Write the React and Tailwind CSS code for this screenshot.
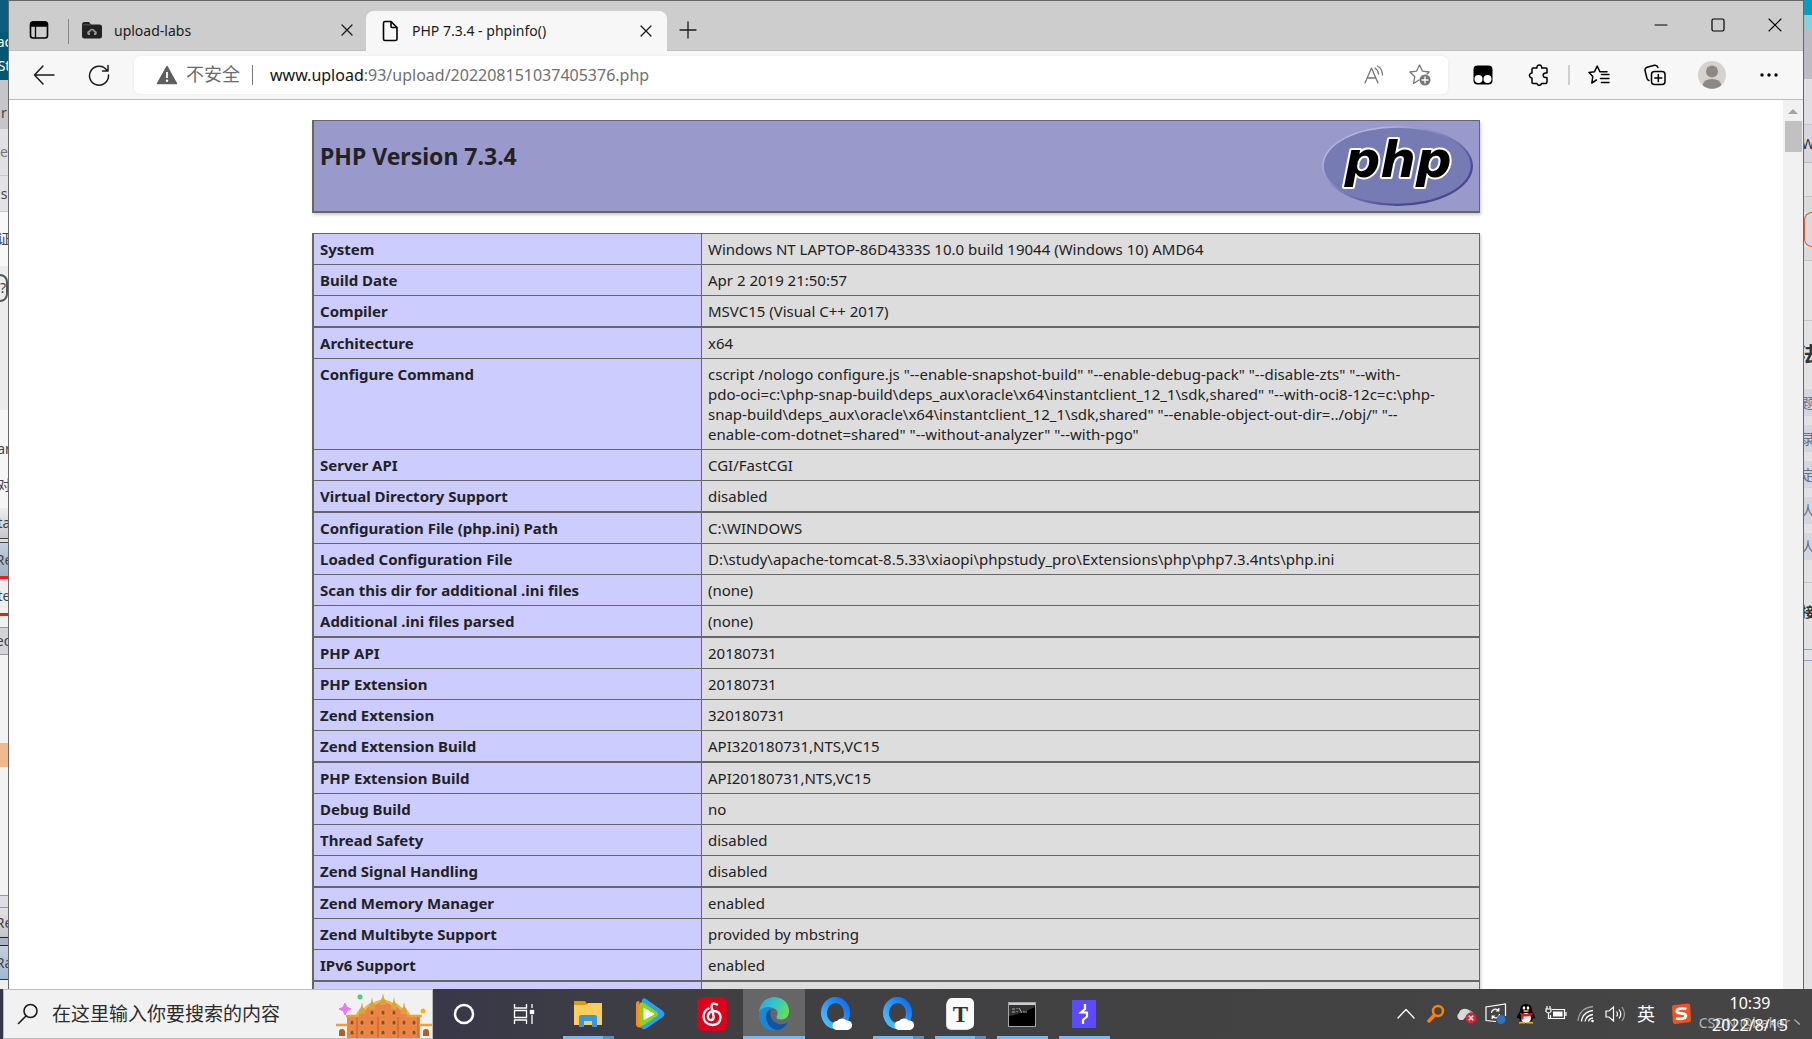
import clsx from 'clsx';

const CONFIGURE = [
  'cscript /nologo configure.js "--enable-snapshot-build" "--enable-debug-pack" "--disable-zts" "--with-',
  'pdo-oci=c:\\php-snap-build\\deps_aux\\oracle\\x64\\instantclient_12_1\\sdk,shared" "--with-oci8-12c=c:\\php-',
  'snap-build\\deps_aux\\oracle\\x64\\instantclient_12_1\\sdk,shared" "--enable-object-out-dir=../obj/" "--',
  'enable-com-dotnet=shared" "--without-analyzer" "--with-pgo"',
].join('\n');

const ROWS = [
  {name: 'System', value: 'Windows NT LAPTOP-86D4333S 10.0 build 19044 (Windows 10) AMD64'},
  {name: 'Build Date', value: 'Apr 2 2019 21:50:57'},
  {name: 'Compiler', value: 'MSVC15 (Visual C++ 2017)'},
  {name: 'Architecture', value: 'x64', thick: true},
  {name: 'Configure Command', value: CONFIGURE},
  {name: 'Server API', value: 'CGI/FastCGI'},
  {name: 'Virtual Directory Support', value: 'disabled'},
  {name: 'Configuration File (php.ini) Path', value: 'C:\\WINDOWS', thick: true},
  {
    name: 'Loaded Configuration File',
    value: 'D:\\study\\apache-tomcat-8.5.33\\xiaopi\\phpstudy_pro\\Extensions\\php\\php7.3.4nts\\php.ini',
  },
  {name: 'Scan this dir for additional .ini files', value: '(none)'},
  {name: 'Additional .ini files parsed', value: '(none)'},
  {name: 'PHP API', value: '20180731', thick: true},
  {name: 'PHP Extension', value: '20180731'},
  {name: 'Zend Extension', value: '320180731'},
  {name: 'Zend Extension Build', value: 'API320180731,NTS,VC15'},
  {name: 'PHP Extension Build', value: 'API20180731,NTS,VC15', thick: true},
  {name: 'Debug Build', value: 'no'},
  {name: 'Thread Safety', value: 'disabled'},
  {name: 'Zend Signal Handling', value: 'disabled'},
  {name: 'Zend Memory Manager', value: 'enabled', thick: true},
  {name: 'Zend Multibyte Support', value: 'provided by mbstring'},
  {name: 'IPv6 Support', value: 'enabled'},
  {name: '', value: '', thick: true},
];

// slices of the windows that lie behind the browser
const LEFT_EDGE = [
  {cls: 'h-[32px] bg-[#0b5f7c]'},
  {cls: 'h-[20px] bg-[#005874] text-white', text: 'ac'},
  {cls: 'h-[28px] bg-[#005874] text-white', text: 'St'},
  {cls: 'h-[49px] bg-[#c6c5c9] pt-4', text: 'r'},
  {cls: 'h-[47px] border-b border-[#c8c8ce] bg-[#e1e0e5] text-[#777] text-lg', text: 'e'},
  {cls: 'h-[36px] border-b border-[#c8c8ce] bg-[#e3e2e7]', text: 's'},
  {cls: 'h-[54px] bg-[#f8f8f8]', text: '证'},
  {cls: 'h-[8px] bg-[#ececec]'},
  {cls: 'h-[28px] rounded-r-full border-y-2 border-r-2 border-[#555] bg-[#ececec]', text: '?'},
  {cls: 'h-[108px] bg-[#ececec]'},
  {cls: 'h-[26px] bg-[#f6f6f6]'},
  {cls: 'h-[26px] bg-[#f6f6f6]', text: 'ar'},
  {cls: 'h-[46px] bg-[#f6f6f6]', text: '对'},
  {cls: 'h-[30px] bg-linear-to-b from-[#eee] to-[#c8c8cc]', text: 'ta'},
  {cls: 'h-[5px] border-y border-[#444] bg-[#ddd]'},
  {cls: 'h-[33px] bg-linear-to-b from-[#c3d0dd] to-[#9fb2c6]', text: 'Re'},
  {cls: 'h-[3px] bg-[#ee1c12]'},
  {cls: 'h-[34px] bg-[#efefef]', text: 'te'},
  {cls: 'h-[3px] bg-[#ee1c12]'},
  {cls: 'h-[11px] bg-[#f0f0f0]'},
  {cls: 'h-[28px] border-y border-[#999] bg-[#d3d4d8]', text: 'eq'},
  {cls: 'h-[88px] bg-[#f3f3f3]'},
  {cls: 'h-[24px] bg-[#f0b98e]'},
  {cls: 'h-[128px] bg-[#f3f3f3]'},
  {cls: 'h-[13px] border-y border-[#999] bg-[#dcdfe6]'},
  {cls: 'h-[29px] bg-linear-to-b from-[#e4e4e6] to-[#c4c4c8]', text: 'Re'},
  {cls: 'h-[9px] border-y border-[#223] bg-[#a9b4c4]'},
  {cls: 'h-[34px] border-b border-[#334] bg-linear-to-b from-[#c3d0dd] to-[#9fbad2]', text: 'Ra'},
  {cls: 'grow bg-[#eee]'},
];

const RIGHT_EDGE = [
  {cls: 'h-[15px] bg-[#0a9cbd]'},
  {cls: 'h-[14px] bg-[#86cfdb]'},
  {cls: 'h-[50px] bg-[#bcbbc2]'},
  {cls: 'h-[46px] border-b border-[#c5c4ca] bg-[#dfdee3]'},
  {cls: 'h-[38px] border-b border-[#bbb] bg-[#d7d6dc]', text: 'W'},
  {cls: 'h-[34px] border-b border-[#c5c5c5] bg-[#e2e2e2]'},
  {cls: 'h-[15px] bg-[#dadada]'},
  {cls: 'h-[35px] rounded-l-full border border-r-0 border-[#e05a40] bg-[#dadada]'},
  {cls: 'h-[14px] border-b border-[#c5c5c5] bg-[#dadada]'},
  {cls: 'h-[60px] border-b border-[#c5c5c5] bg-[#e4e4e4]'},
  {cls: 'h-[68px] text-xl font-bold', text: '法'},
  {cls: 'mb-[9px] h-[27px] bg-[#d3d6de] text-[#66708c]', text: '题'},
  {cls: 'mb-[9px] h-[27px] bg-[#d3d6de] text-[#66708c]', text: '录'},
  {cls: 'mb-[9px] h-[27px] bg-[#d3d6de] text-[#66708c]', text: '定'},
  {cls: 'mb-[9px] h-[27px] bg-[#d3d6de] text-[#66708c]', text: '人'},
  {cls: 'h-[27px] bg-[#d3d6de] text-[#66708c]', text: '人'},
  {cls: 'h-[23px] border-b border-[#c5c5c5]'},
  {cls: 'h-[58px] text-lg font-bold', text: '接'},
  {cls: 'h-[28px] text-[#4a76a8]', text: '□'},
  {cls: 'grow'},
];

const Edge = ({slices, base}) => (
  <div aria-hidden="true" className={clsx('flex w-2 shrink-0 flex-col overflow-hidden', base)}>
    {slices.map((s, i) => (
      <div
        key={i}
        className={clsx('flex shrink-0 items-center justify-center overflow-hidden text-sm whitespace-nowrap', s.cls)}
      >
        {s.text}
      </div>
    ))}
  </div>
);

const Svg = ({size = 20, box = 20, children, className}) => (
  <svg
    width={size}
    height={size}
    viewBox={`0 0 ${box} ${box}`}
    fill="none"
    stroke="currentColor"
    strokeWidth="1.3"
    strokeLinecap="round"
    strokeLinejoin="round"
    className={clsx('shrink-0', className)}
  >
    {children}
  </svg>
);

const CloseIcon = () => (
  <Svg size={12} box={12}>
    <path d="M1 1l10 10M11 1L1 11" />
  </Svg>
);

const TabBar = () => (
  <div className="flex h-[51px] items-end border-b border-[#bfbfbf] bg-[#cdcdcd] text-[14px] text-[#1b1b1b]">
    <button type="button" aria-label="Tab actions" className="flex h-[39px] w-[59px] items-center justify-center">
      <Svg size={20} className="text-black">
        <rect x="1.5" y="2" width="17" height="16" rx="2.5" strokeWidth="1.6" />
        <path d="M2 6V4.500A2.500 2.500 0 0 1 4.500 2h11A2.500 2.500 0 0 1 18 4.500V6z" fill="currentColor" />
        <path d="M6.500 6v12" />
      </Svg>
    </button>
    <span className="mb-[6px] h-[25px] w-px bg-[#888]" />
    <div className="flex h-[39px] w-[297px] items-center pl-[13px]">
      <svg width="20" height="18" viewBox="0 0 20 18" className="shrink-0">
        <path d="M0 3.500Q0 1 2.500 1H7l2 2.500h8.500Q20 3.500 20 6v9q0 2.500-2.500 2.500h-15Q0 17.500 0 15z" fill="#222" />
        <path d="M0 5Q0 3 2 3h6l1 1.500H0z" fill="#444" />
        <path d="M6.500 14a2.200 2.200 0 0 1 .5-4.200 3.200 3.200 0 0 1 6 0 2.200 2.200 0 0 1 .5 4.200H12V12h1l-3-3-3 3h1v2z" fill="#999" />
      </svg>
      <span className="ml-3 grow">upload-labs</span>
      <button type="button" aria-label="Close upload-labs" className="mr-[13px]">
        <CloseIcon />
      </button>
    </div>
    <div className="-mb-px flex h-[40px] w-[301px] items-center rounded-t-lg bg-[#f7f7f7] pr-[15px] pl-[13px]">
      <Svg size={22} box={22} className="text-black">
        <path d="M6 1.500h6L18 7.500V19q0 1.500-1.500 1.500H6Q4.500 20.500 4.500 19V3Q4.500 1.500 6 1.500z" strokeWidth="1.6" />
        <path d="M12 2v4.500q0 1 1 1h4.500" strokeWidth="1.6" />
      </Svg>
      <span className="ml-[11px] grow">PHP 7.3.4 - phpinfo()</span>
      <button type="button" aria-label="Close phpinfo">
        <CloseIcon />
      </button>
    </div>
    <button type="button" aria-label="New tab" className="flex h-[39px] w-[42px] items-center justify-center">
      <Svg size={18} box={18}>
        <path d="M9 1v16M1 9h16" />
      </Svg>
    </button>
    <div className="ml-auto flex h-full items-center text-black">
      <button type="button" aria-label="Minimize" className="flex h-full w-[57px] items-center justify-center">
        <Svg size={14} box={14}>
          <path d="M1 7h12" strokeWidth="1" />
        </Svg>
      </button>
      <button type="button" aria-label="Maximize" className="flex h-full w-[57px] items-center justify-center">
        <Svg size={14} box={14}>
          <rect x="1" y="1" width="12" height="12" rx="1.500" strokeWidth="1.200" />
        </Svg>
      </button>
      <button type="button" aria-label="Close window" className="flex h-full w-[57px] items-center justify-center">
        <Svg size={14} box={14}>
          <path d="M1 1l12 12M13 1L1 13" strokeWidth="1.100" />
        </Svg>
      </button>
    </div>
  </div>
);

const ToolButton = ({label, wide, children}) => (
  <button
    type="button"
    aria-label={label}
    className={clsx('flex h-full shrink-0 items-center justify-center', wide ? 'w-[58px]' : 'w-[56px]')}
  >
    {children}
  </button>
);

const Toolbar = () => (
  <div className="flex h-[50px] items-center border-b border-[#bdbdbd] bg-[#f7f7f7] pr-[6px] text-[#1b1b1b]">
    <button type="button" aria-label="Back" className="ml-[24px] shrink-0">
      <Svg size={22} box={22}>
        <path d="M21 11H1.500M10 2L1.500 11l8.500 9" strokeWidth="1.500" />
      </Svg>
    </button>
    <button type="button" aria-label="Refresh" className="mr-[24px] ml-[33px] shrink-0">
      <Svg size={22} box={22}>
        <path d="M19 6.500A9.500 9.500 0 1 0 20.500 11M20 1.500v5.500h-5.500" strokeWidth="1.500" />
      </Svg>
    </button>
    <div className="flex h-[38px] min-w-0 grow items-center rounded-md bg-white pl-[22px] shadow-[0_0_3px_#e8e8e8]">
      <svg width="22" height="20" viewBox="0 0 22 20" className="shrink-0">
        <path d="M11 1.500L20.500 18.500H1.500z" fill="#5f5f5f" stroke="#5f5f5f" strokeWidth="1.500" strokeLinejoin="round" />
        <path d="M11 7v6" stroke="#fff" strokeWidth="1.800" />
        <circle cx="11" cy="15.800" r="1.200" fill="#fff" />
      </svg>
      <span className="ml-[8px] shrink-0 text-[18px] text-[#6b6b6b]">不安全</span>
      <span className="mr-[17px] ml-[12px] h-5 w-px shrink-0 bg-[#777]" />
      <p className="min-w-0 grow truncate text-[16px] text-[#6f6f6f]">
        <span className="text-[#111]">www.upload</span>:93/upload/202208151037405376.php
      </p>
      <button type="button" aria-label="Read aloud" className="flex w-[46px] shrink-0 justify-center text-[#777]">
        <Svg size={20}>
          <path d="M1 18L7.500 3 14 18M3.200 13h8.600" />
          <path d="M11 3q3 2 3.500 6M13.500 1q5 3 5 9" />
        </Svg>
      </button>
      <button type="button" aria-label="Add to favorites" className="mr-[5px] flex w-[46px] shrink-0 justify-center text-[#777]">
        <Svg size={22} box={22}>
          <path d="M10 16l-5.500 3.500 1.300-6.800L.8 8l6.700-.8L10.500 1l3 6.200 6.700.8-2.200 2" />
          <circle cx="16" cy="16" r="5.500" fill="currentColor" stroke="none" />
          <path d="M16 13v6M13 16h6" stroke="#fff" />
        </Svg>
      </button>
    </div>
    <div className="ml-[7px] flex h-full items-center text-black">
      <ToolButton label="Tampermonkey">
        <svg width="20" height="20" viewBox="0 0 20 20">
          <rect x="0.500" y="0.500" width="19" height="19" rx="4" />
          <circle cx="5.500" cy="14" r="4" fill="#fff" />
          <circle cx="14.500" cy="14" r="4" fill="#fff" />
        </svg>
      </ToolButton>
      <ToolButton label="Extensions">
        <Svg size={22} box={22}>
          <path
            d="M5 4h4a2.400 2.400 0 1 1 4.600 0H18q1 0 1 1v4h-1.500a2.300 2.300 0 0 0 0 4.600H19V18q0 1.500-1.500 1.500h-4a2.300 2.300 0 0 1-4.500 0H5q-1 0-1-1v-4.500a2.500 2.500 0 1 1 0-5V5q0-1 1-1z"
            strokeWidth="1.500"
          />
        </Svg>
      </ToolButton>
      <span className="mx-px h-5 w-[2px] bg-[#cfcfcf]" />
      <ToolButton label="Favorites">
        <Svg size={22} box={22}>
          <path d="M8.500 16l-4.700 3 1-6.500L1 8.500l5.500-.8L9.200 2l2.700 5.700H19" strokeWidth="1.500" />
          <path d="M13.500 10.500H21M12.500 14.500H21M13.500 18.500H21" strokeWidth="1.500" />
        </Svg>
      </ToolButton>
      <ToolButton label="Collections">
        <Svg size={22} box={22}>
          <rect x="7.500" y="7.500" width="13.500" height="13" rx="3" strokeWidth="1.500" />
          <path d="M14.300 10.500v7M10.800 14h7M5 16.500q-1.500-.5-2-2L1 6.500Q.6 4 3 3.200L10.500 1.200Q13 .8 14 3.500" strokeWidth="1.500" />
        </Svg>
      </ToolButton>
      <ToolButton label="Profile" wide>
        <svg width="28" height="28" viewBox="0 0 28 28">
          <circle cx="14" cy="14" r="14" fill="#d6d3cf" />
          <circle cx="14" cy="10.500" r="6" fill="#8d8884" />
          <path d="M4.500 24Q6 18 14 18t9.500 6A14 14 0 0 1 4.500 24z" fill="#8d8884" />
        </svg>
      </ToolButton>
      <ToolButton label="Settings and more">
        <svg width="18" height="4" viewBox="0 0 18 4">
          <circle cx="2" cy="2" r="1.700" />
          <circle cx="9" cy="2" r="1.700" />
          <circle cx="16" cy="2" r="1.700" />
        </svg>
      </ToolButton>
    </div>
  </div>
);

const PhpLogo = () => (
  <svg width="151" height="80" viewBox="0 0 151 80" role="img" aria-label="PHP logo" className="shrink-0">
    <defs>
      <linearGradient id="rim" x1="0" y1="0" x2="1" y2="1">
        <stop offset="0.200" stopColor="#b4b5dc" />
        <stop offset="0.500" stopColor="#777bb3" />
        <stop offset="0.750" stopColor="#484893" />
      </linearGradient>
    </defs>
    <ellipse cx="75.500" cy="40" rx="75.500" ry="40" fill="url(#rim)" />
    <ellipse cx="75.300" cy="39.700" rx="73.500" ry="38" fill="#777bb3" />
    <text
      x="76"
      y="51"
      textAnchor="middle"
      fontFamily="DejaVu Sans, sans-serif"
      fontSize="50"
      fontWeight="700"
      fontStyle="italic"
      fill="#000"
      stroke="#fff"
      strokeWidth="4"
      strokeLinejoin="round"
      paintOrder="stroke"
    >
      php
    </text>
  </svg>
);

const PhpInfo = () => (
  <div className="min-w-0 grow overflow-hidden bg-white pt-5 text-[#222]">
    <header className="mx-auto flex w-full max-w-[1168px] justify-between border border-b-2 border-l-2 border-[#666] bg-[#9999cc] px-[6px] py-[5px] shadow-[1px_2px_3px_#ccc]">
      <h1 className="pt-[14px] text-[23px] leading-[32px] font-bold">PHP Version 7.3.4</h1>
      <PhpLogo />
    </header>
    <table className="mx-auto mt-5 w-full max-w-[1168px] table-fixed border-separate border-spacing-0 border-r border-l-2 border-[#666] text-[15px] leading-[20px] shadow-[1px_2px_3px_#ccc]">
      <colgroup>
        <col className="w-[387px]" />
        <col />
      </colgroup>
      <tbody>
        {ROWS.map((row, i) => (
          <tr key={i} className="align-top">
            <th
              scope="row"
              className={clsx('h-[31px] border-[#666] bg-[#ccccff] px-[6px] py-[5px] text-left font-bold', row.thick ? 'border-t-2' : 'border-t')}
            >
              {row.name}
            </th>
            <td
              className={clsx('border-l border-[#666] bg-[#dddddd] px-[6px] py-[5px] whitespace-pre-line', row.thick ? 'border-t-2' : 'border-t')}
            >
              {row.value}
            </td>
          </tr>
        ))}
      </tbody>
    </table>
  </div>
);

const Scrollbar = () => (
  <div className="flex w-5 shrink-0 flex-col items-center bg-[#f1f1f1] pt-[9px]">
    <svg width="10" height="5" viewBox="0 0 10 5">
      <path d="M5 0l5 5H0z" fill="#a3a3a3" />
    </svg>
    <span className="mt-[7px] h-[31px] w-[17px] bg-[#c1c1c1]" />
  </div>
);

const Temple = () => (
  <svg width="96" height="44" viewBox="0 0 96 44" className="shrink-0 self-end">
    <path d="M11 44V22h10q1-6 8-7 3-5 9-5 4-3 9-3t9 3q6 0 9 5 7 1 8 7h11v22z" fill="#ea8346" />
    <path d="M21 22q1-6 8-7 3-5 9-5 4-3 9-3t9 3q6 0 9 5 7 1 8 7" fill="none" stroke="#e8b84a" strokeWidth="2.500" />
    {[16, 37, 57, 77].map((x) => (
      <path key={x} d={`M${x + 5} 23v21`} stroke="#d96f33" strokeWidth="2" />
    ))}
    <path d="M10 22h13M71 22h15M0 31h12M83 31h13" stroke="#e0a82e" strokeWidth="2.500" />
    {[26, 36, 47, 58, 68].map((x, i) => {
      const top = [11, 6, 2, 6, 11][i];
      return <path key={x} d={`M${x} ${top - 3}l1 5 2 3v4h-6v-4l2-3z`} fill="#d9a53a" />;
    })}
    {[36, 47, 58].map((x) => (
      <path key={x} d={`M${x - 2} 21v-3a2 2 0 0 1 4 0v3z`} fill="#9a4a18" stroke="#e59a4a" />
    ))}
    {[16, 26, 36, 47, 58, 68, 78].map((x) => (
      <g key={x} fill="#9a4a18" stroke="#e59a4a">
        <path d={`M${x - 2} 31v-3a2 2 0 0 1 4 0v3z`} />
        <path d={`M${x - 2} 41v-3a2 2 0 0 1 4 0v3z`} />
      </g>
    ))}
    <path d="M3 42v-4a3 3 0 0 1 6 0v4zM87 42v-4a3 3 0 0 1 6 0v4z" fill="#b0602a" />
    <circle cx="24" cy="3" r="2.500" fill="#45d07c" />
    <circle cx="87" cy="17" r="2.500" fill="#ffb400" />
    <path d="M9 9l1.800 4.200L15 15l-4.200 1.800L9 21l-1.800-4.200L3 15l4.200-1.800z" fill="#e879f9" stroke="#e879f9" />
  </svg>
);

const QQBrowser = () => (
  <svg width="32" height="36" viewBox="0 0 32 36">
    <defs>
      <linearGradient id="qqb" x1="0" y1="1" x2="1" y2="0">
        <stop offset="0" stopColor="#4cc4ff" />
        <stop offset="1" stopColor="#0a6cf5" />
      </linearGradient>
    </defs>
    <ellipse cx="15.500" cy="17" rx="11.500" ry="13" fill="none" stroke="url(#qqb)" strokeWidth="6" />
    <path d="M17 34a4.500 4.500 0 0 1 0-9 6 6 0 0 1 9.500-.5 4.800 4.800 0 0 1 1.500 9.500z" fill="#fff" />
  </svg>
);

const TASKS = [
  {
    label: 'Cortana',
    icon: (
      <svg width="22" height="22" viewBox="0 0 22 22" fill="none">
        <circle cx="11" cy="11" r="9" stroke="#fff" strokeWidth="2.500" />
      </svg>
    ),
  },
  {
    label: 'Task View',
    icon: (
      <svg width="22" height="22" viewBox="0 0 22 22" fill="none" stroke="#fff" strokeWidth="1.300" className="mr-1">
        <path d="M1.500 1v4h12V1M1.500 21v-4h12v4M1.500 7.500h12v7h-12zM19 1v4M19 12v9" />
        <rect x="17.500" y="7.500" width="3" height="3" fill="#fff" />
      </svg>
    ),
  },
  {
    label: 'File Explorer',
    mark: 'split',
    icon: (
      <svg width="30" height="28" viewBox="0 0 30 28">
        <path d="M1 1h11l2 3v5H1z" fill="#e0980c" />
        <path d="M1 5h12l2-2h14v22H1z" fill="#fccd5c" />
        <path d="M6 27V17q0-2 2-2h14q2 0 2 2v10h-5v-6h-8v6z" fill="#3b97dd" />
      </svg>
    ),
  },
  {
    label: 'Tencent Video',
    icon: (
      <svg width="32" height="34" viewBox="0 0 32 34">
        <path d="M2 7q0-3 3-3l5 26q-8 2-8-3z" fill="#ff8a1c" />
        <path d="M8 3q1-3 4-1l17 12q3 3 0 6L13 31q-4 3-6-1z" fill="#2e9df2" />
        <path d="M5 8q1-4 5-2l13 9q2 2 0 4L10 28q-4 2-5-2z" fill="#86d61c" />
        <path d="M10 11.500l10 5.500-10 5.500z" fill="#fff" stroke="#fff" strokeLinejoin="round" />
      </svg>
    ),
  },
  {
    label: 'NetEase Music',
    icon: (
      <svg width="30" height="34" viewBox="0 0 30 34" fill="none" stroke="#fff" strokeWidth="2.400" strokeLinecap="round">
        <rect width="30" height="34" rx="6" fill="#dd001b" stroke="none" />
        <path d="M20 7.500Q15 5 14.500 9.500L16.500 19q.5 4-2.500 4-3.500 0-3-4.500.8-4 5.500-4.500 6.500 0 7 6 0 7.500-8 8-8.500-.5-9-8.500Q7 13.500 11.500 11.500" />
      </svg>
    ),
  },
  {
    label: 'Microsoft Edge',
    mark: 'active',
    icon: (
      <svg width="32" height="36" viewBox="0 0 32 36">
        <defs>
          <linearGradient id="edgeTop" x1="0" y1="0.300" x2="1" y2="0.600">
            <stop offset="0" stopColor="#2aa9e6" />
            <stop offset="0.500" stopColor="#32c8c8" />
            <stop offset="1" stopColor="#6fdc4c" />
          </linearGradient>
        </defs>
        <path d="M1 16Q3 2 16 1q14 1 15 14 0 8-8 8.500-6 0-4-3.500 2-6-4-8Q6 10 1 16z" fill="url(#edgeTop)" />
        <path d="M1 16q5-7 13-4-7 2-6 10 1 9 10 12Q5 36 1.500 24 .5 20 1 16z" fill="#1888d8" />
        <path d="M13 13q-6 3-4.500 10.500Q11 33 19 34q8-1 11-8-4 3-9 2-8-2-8.500-9-.2-4 .5-6z" fill="#0f55a5" />
      </svg>
    ),
  },
  {label: 'QQ Browser', icon: <QQBrowser />},
  {label: 'QQ Browser window', mark: 'split', icon: <QQBrowser />},
  {
    label: 'Typora',
    mark: 'split',
    icon: (
      <svg width="30" height="34" viewBox="0 0 30 34">
        <rect x="1" y="3" width="26" height="30" rx="5" fill="#ddd" />
        <rect x="2" y="1" width="27" height="31" rx="5" fill="#fafafa" />
        <text x="15.500" y="25" textAnchor="middle" fontFamily="Liberation Serif, serif" fontWeight="700" fontSize="23" fill="#333">
          T
        </text>
      </svg>
    ),
  },
  {
    label: 'Command Prompt',
    mark: 'open',
    icon: (
      <svg width="28" height="25" viewBox="0 0 28 25">
        <rect x="0.500" y="0.500" width="27" height="24" fill="#000" stroke="#a6a6a6" />
        <path d="M1 2h26" stroke="#ccc" strokeWidth="2" />
        <path d="M1 14Q14 12 27 5v-2H1z" fill="#333" />
        <path d="M4 7h3M4 10h3M9 6v1M9 9v1M11 6l3 5M15 10h4" stroke="#ccc" strokeWidth="0.800" />
      </svg>
    ),
  },
  {
    label: 'Burp Suite',
    mark: 'open',
    icon: (
      <svg width="24" height="28" viewBox="0 0 24 28">
        <rect width="24" height="28" fill="#5b4bff" />
        <path d="M13 4v5l-4 3.500h6v4L11 20v4" fill="none" stroke="#fff" strokeWidth="2.200" />
      </svg>
    ),
  },
];

const Task = ({label, mark, icon}) => (
  <button
    type="button"
    aria-label={label}
    className={clsx('flex h-full w-[62px] shrink-0 flex-col items-center', mark === 'active' && 'bg-[#666666]')}
  >
    <span className="flex grow items-center pt-[3px]">{icon}</span>
    <span className={clsx('flex h-[3px]', mark === 'active' ? 'w-full' : 'w-[51px]')}>
      {mark && <span className="grow bg-[#76b9ed]" />}
      {mark === 'split' && <span className="w-[11px] bg-[#5b8fb8]" />}
    </span>
  </button>
);

const TRAY = [
  {
    label: 'Show hidden icons',
    icon: (
      <Svg size={18} box={18}>
        <path d="M1 13l8-8.500 8 8.500" />
      </Svg>
    ),
  },
  {
    label: 'Everything',
    icon: (
      <svg width="18" height="20" viewBox="0 0 18 20" fill="none" stroke="#ff7f00" strokeLinecap="round">
        <circle cx="11" cy="7" r="5" strokeWidth="2.500" />
        <path d="M7 11.500l-5 5.500" strokeWidth="3.500" />
      </svg>
    ),
  },
  {
    label: 'OneDrive',
    icon: (
      <svg width="22" height="20" viewBox="0 0 22 20">
        <path d="M8 8a6 6 0 0 1 10 1q2 1 2 5h-9z" fill="#9c9c9c" />
        <path d="M5 16a4 4 0 0 1-1-7 6 6 0 0 1 11-1L8 16z" fill="#d8d8d8" />
        <circle cx="16" cy="14" r="5.500" fill="#e0202e" />
        <path d="M13.800 11.800l4.400 4.400M18.200 11.800l-4.400 4.400" stroke="#fff" strokeWidth="1.500" />
      </svg>
    ),
  },
  {
    label: 'Sync',
    icon: (
      <svg width="22" height="22" viewBox="0 0 22 22" fill="none" stroke="#fff" strokeWidth="1.200">
        <path d="M11 18.500L1 17.500V4L20.500 1v12" />
        <path d="M6.500 10a4 4 0 0 1 7-2.500M13.800 5v3h-3M14.500 11a4 4 0 0 1-7 2.500M7.200 16v-3h3" />
        <circle cx="16" cy="16.500" r="4.500" fill="#2a74c4" stroke="none" />
      </svg>
    ),
  },
  {
    label: 'QQ',
    icon: (
      <svg width="20" height="22" viewBox="0 0 20 22">
        <path d="M10 1q6 0 6 7 3 4 3 7-1 1-2-.5Q16 20 10 20T3 14.500Q2 16 1 15q0-3 3-7 0-7 6-7z" fill="#050505" />
        <ellipse cx="10" cy="15" rx="5" ry="5" fill="#fff" />
        <ellipse cx="8" cy="5" rx="1.300" ry="1.800" fill="#fff" />
        <ellipse cx="12" cy="5" rx="1.300" ry="1.800" fill="#fff" />
        <ellipse cx="10" cy="8" rx="3" ry="1" fill="#f5a81c" />
        <path d="M3.500 9.500q6.500 3 13 0v2.500q-5 2-9 1.500v3H5v-4z" fill="#e5141e" />
        <path d="M3 20q2-2 6 0zM11 20q4-2 6 0z" fill="#f5a81c" stroke="#f5a81c" />
      </svg>
    ),
  },
  {
    label: 'Battery',
    icon: (
      <svg width="22" height="16" viewBox="0 0 22 16" fill="none" stroke="#fff" strokeWidth="1.200">
        <path d="M7 3.500h12.500v9h-14V9M21 6v4" />
        <path d="M8 5.500h9.500v5H8z" fill="#fff" stroke="none" />
        <path d="M2 0v3M5 0v3M1 3h5v2.500q-1 1.500-2.500 1.500T1 5.500zM3.500 7v5.500h2" />
      </svg>
    ),
  },
  {
    label: 'Network',
    icon: (
      <svg width="18" height="18" viewBox="0 0 18 18" fill="none" stroke="#fff" strokeWidth="1.300">
        <path d="M1 16Q2 3 16 1.500" opacity="0.500" />
        <path d="M4.500 16.500Q5.500 7 16 5.500M8 16.500Q9 10.500 16 9.500M11.500 16.500Q12 13.500 16 13" />
        <circle cx="15.500" cy="16" r="1.300" fill="#fff" stroke="none" />
      </svg>
    ),
  },
  {
    label: 'Volume',
    icon: (
      <svg width="22" height="18" viewBox="0 0 22 18" fill="none" stroke="#fff" strokeWidth="1.200">
        <path d="M1 6h3l4.500-4v14L4 12H1z" />
        <path d="M11.500 6.500q2 2.500 0 5M14 4.500q3.500 4.500 0 9" />
        <path d="M17 2q5 7 0 14" opacity="0.500" />
      </svg>
    ),
  },
  {label: 'Input language', icon: <span className="text-[18px] leading-none">英</span>},
];

const Taskbar = () => (
  <footer className="relative flex h-[50px] shrink-0 bg-linear-to-r from-[#36364a] from-20% via-[#404042] via-40% to-[#454545] pl-[3px] text-white">
    <label className="flex w-[430px] shrink-0 items-center border border-[#bdbdbd] bg-[#f1f1f1] pl-[13px] text-[#1b1b1b]">
      <Svg size={22} box={22}>
        <circle cx="13.500" cy="8" r="6.500" strokeWidth="1.600" />
        <path d="M9 13l-7.500 7.500" strokeWidth="1.600" />
      </Svg>
      <input
        type="text"
        aria-label="Search"
        placeholder="在这里输入你要搜索的内容"
        className="ml-[13px] min-w-0 grow bg-transparent text-[19px] outline-none placeholder:text-[#2b2b2b]"
      />
      <Temple />
    </label>
    {TASKS.map((t) => (
      <Task key={t.label} {...t} />
    ))}
    <div className="ml-auto flex items-center">
      {TRAY.map((t) => (
        <button key={t.label} type="button" aria-label={t.label} className="flex h-full w-[30px] items-center justify-center">
          {t.icon}
        </button>
      ))}
      <button type="button" aria-label="Sogou" className="ml-[4px] flex h-full w-[32px] items-center justify-center">
        <svg width="22" height="22" viewBox="0 0 22 22">
          <path d="M2 4Q2 2 4 2l14-1.500q2 0 2.200 2L21 17q0 2-2 2.300L5 21q-2 0-2.200-2z" fill="#f4511e" />
          <path d="M16.500 6Q12 4.500 7.500 6.500q-2 2.500 1 3.500l5.500.8q3 1 1 4-5 2-9 .5" fill="none" stroke="#fff" strokeWidth="2.800" />
        </svg>
      </button>
      <div className="w-[115px] pr-[9px] text-center text-[16px] leading-[22px]">
        <p>10:39</p>
        <p>2022/8/15</p>
      </div>
    </div>
    <span className="absolute right-2 bottom-[6px] text-[14px] leading-[20px] text-white/60">CSDN @baker丶</span>
  </footer>
);

export default function App() {
  return (
    <div className='flex h-screen w-full flex-col overflow-hidden font-["Noto_Sans","Noto_Sans_CJK_SC",sans-serif]'>
      <div className="flex min-h-0 grow">
        <Edge slices={LEFT_EDGE} base="bg-[#eee] text-[#444]" />
        <div className="flex min-w-0 grow flex-col border-x border-t border-[#666]">
          <TabBar />
          <Toolbar />
          <main className="flex min-h-0 grow">
            <PhpInfo />
            <Scrollbar />
          </main>
        </div>
        <Edge slices={RIGHT_EDGE} base="bg-[#e2e2e4] text-[#333]" />
      </div>
      <Taskbar />
    </div>
  );
}
